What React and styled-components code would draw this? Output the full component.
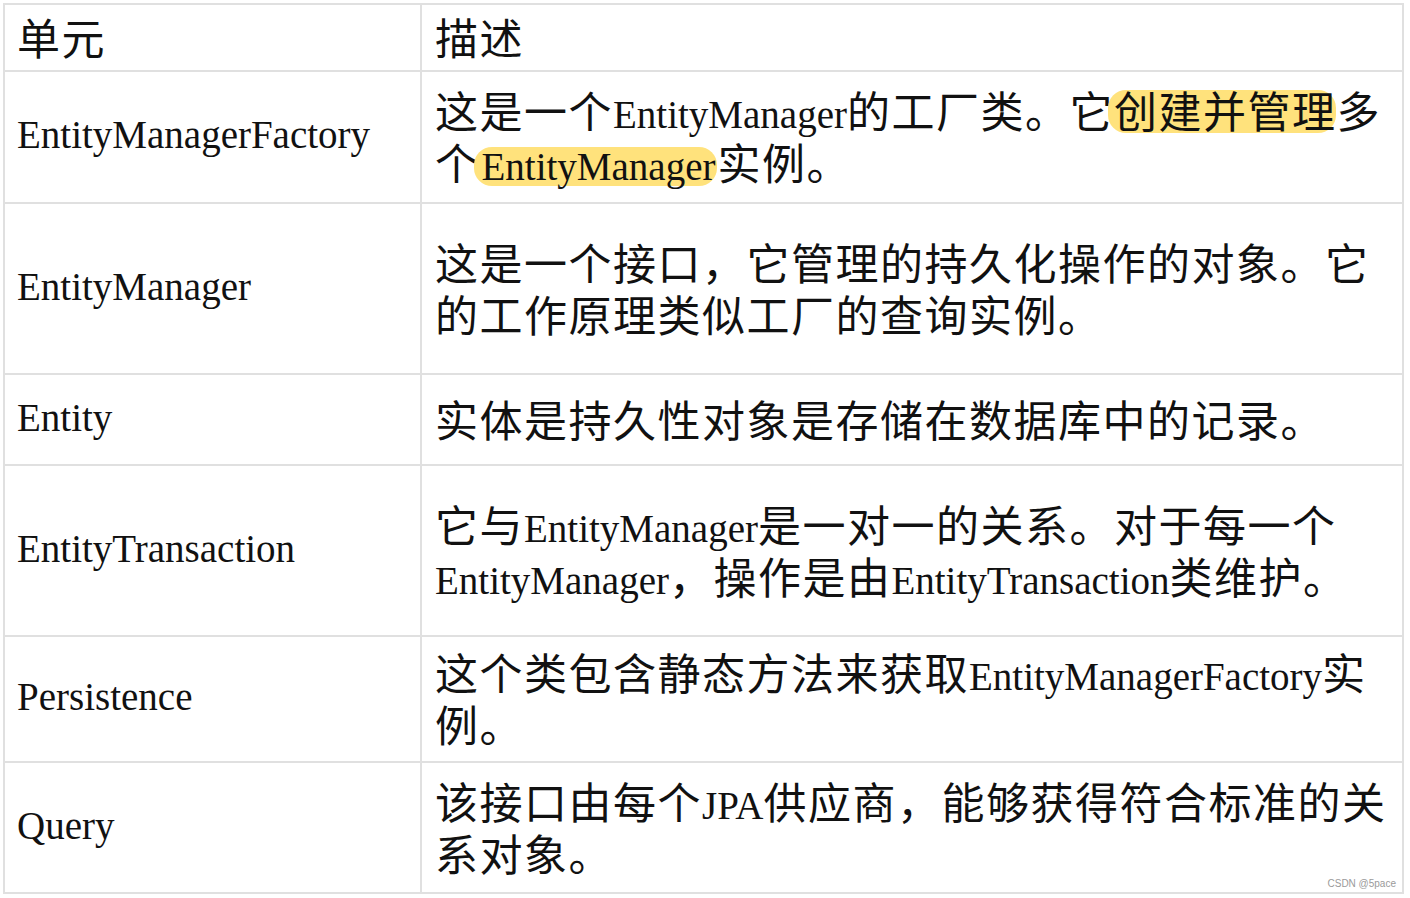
import React from 'react'
import styled, { createGlobalStyle } from 'styled-components'

const GlobalStyle = createGlobalStyle`
  html, body {
    margin: 0;
    padding: 0;
    background: #ffffff;
  }
  body {
    font-family: "Liberation Serif", "Noto Sans CJK SC", serif;
    color: #111;
  }
`

const rows = [
	{
		unit: 'EntityManagerFactory',
		height: 132,
		lines: [
			['这是一个', { latin: 'EntityManager' }, '的工厂类。它', { mark: '创建并管理' }, '多'],
			['个', { mark: 'EntityManager', latin: true }, '实例。'],
		],
	},
	{
		unit: 'EntityManager',
		height: 171,
		lines: [
			['这是一个接口，它管理的持久化操作的对象。它'],
			['的工作原理类似工厂的查询实例。'],
		],
	},
	{
		unit: 'Entity',
		height: 91,
		lines: [['实体是持久性对象是存储在数据库中的记录。']],
	},
	{
		unit: 'EntityTransaction',
		height: 171,
		lines: [
			['它与', { latin: 'EntityManager' }, '是一对一的关系。对于每一个'],
			[{ latin: 'EntityManager' }, '，操作是由', { latin: 'EntityTransaction' }, '类维护。'],
		],
	},
	{
		unit: 'Persistence',
		height: 126,
		lines: [
			['这个类包含静态方法来获取', { latin: 'EntityManagerFactory' }, '实'],
			['例。'],
		],
	},
	{
		unit: 'Query',
		height: 131,
		lines: [
			['该接口由每个', { latin: 'JPA' }, '供应商，能够获得符合标准的关'],
			['系对象。'],
		],
	},
]

const App = () => {
	const renderPart = (part, i) => {
		if (typeof part === 'string') return <Han key={i}>{part}</Han>
		if (part.mark) {
			return (
				<Mark key={i} $latin={!!part.latin}>
					{part.latin ? <Latin>{part.mark}</Latin> : <Han>{part.mark}</Han>}
				</Mark>
			)
		}
		return <Latin key={i}>{part.latin}</Latin>
	}

	return (
		<Page>
			<GlobalStyle />
			<Table>
				<Row $height={67}>
					<UnitCell><Han>单元</Han></UnitCell>
					<DescCell><Line><Han>描述</Han></Line></DescCell>
				</Row>
				{rows.map((row) => (
					<Row key={row.unit} $height={row.height}>
						<UnitCell><Latin>{row.unit}</Latin></UnitCell>
						<DescCell>
							{row.lines.map((line, li) => (
								<Line key={li}>{line.map(renderPart)}</Line>
							))}
						</DescCell>
					</Row>
				))}
				<Watermark>CSDN @5pace</Watermark>
			</Table>
		</Page>
	)
}

const Page = styled.div`
  padding: 3px 0 0 3px;
`

const Table = styled.div`
  position: relative;
  width: 1401px;
  border-top: 2px solid #e0e0e0;
  border-left: 2px solid #e0e0e0;
  box-sizing: border-box;
`

const Row = styled.div`
  display: grid;
  grid-template-columns: 417px 1fr;
  height: ${(p) => p.$height}px;
  box-sizing: border-box;
  border-bottom: 2px solid #e0e0e0;
`

const Cell = styled.div`
  display: flex;
  flex-direction: column;
  justify-content: center;
  border-right: 2px solid #e0e0e0;
  box-sizing: border-box;
  font-size: 43px;
  line-height: 52px;
  white-space: nowrap;
  overflow: hidden;
`

const UnitCell = styled(Cell)`
  padding: 0 0 4px 12px;
`

const DescCell = styled(Cell)`
  padding: 0 0 4px 13px;
`

const Line = styled.div`
  height: 52px;
  display: flex;
  align-items: baseline;
`

const Han = styled.span`
  font-family: "Noto Sans CJK SC", sans-serif;
  font-size: 43px;
  font-weight: 400;
  letter-spacing: 1.5px;
`

const Latin = styled.span`
  font-family: "Liberation Serif", serif;
  font-size: 39px;
`

const Mark = styled.span`
  background: #ffe27c;
  border-radius: 18px;
  padding: ${(p) => (p.$latin ? '0 2px 0 8px' : '0 0 0 6px')};
  margin-left: -6px;
  line-height: 38px;
  display: inline-block;
`

const Watermark = styled.span`
  position: absolute;
  right: 8px;
  bottom: 5px;
  font-family: "Liberation Sans", Arial, sans-serif;
  font-size: 10px;
  color: #9a9a9a;
`

export default App
